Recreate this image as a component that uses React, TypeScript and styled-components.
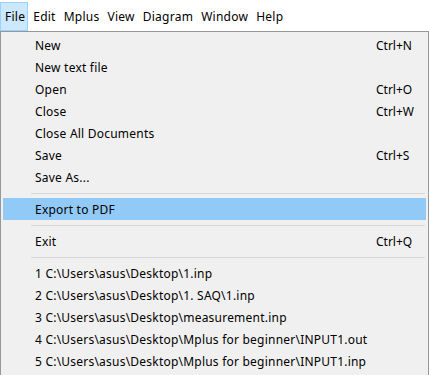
import React from 'react';
import styled, { createGlobalStyle } from 'styled-components';

const GlobalStyle = createGlobalStyle`
  html, body {
    margin: 0;
    padding: 0;
    background: #ffffff;
    overflow: hidden;
  }
  body {
    font-family: "Noto Sans", "Open Sans", "Liberation Sans", sans-serif;
    font-size: 12px;
    color: #000;
  }
`;

const Window = styled.div`
  width: 429px;
  height: 375px;
  display: flex;
  flex-direction: column;
  background: #fff;
`;

const MenuBar = styled.div`
  display: flex;
  align-items: stretch;
  height: 29px;
  padding-top: 2px;
  background: #fff;
`;

const MenuBarItem = styled.div<{ active?: boolean }>`
  display: flex;
  align-items: center;
  padding: 0 2px 0 4px;
  border: 1px solid ${({ active }) => (active ? '#99d1ff' : 'transparent')};
  background: ${({ active }) => (active ? '#cce8ff' : 'transparent')};
  letter-spacing: 0.25px;
`;

const Dropdown = styled.div`
  flex: 1;
  display: flex;
  flex-direction: column;
  background: #f0f0f0;
  border: 1px solid #979797;
  border-bottom: none;
  padding: 2px 2px 0 2px;
`;

const Item = styled.div<{ highlighted?: boolean }>`
  height: 22px;
  display: flex;
  align-items: center;
  padding-left: 32px;
  background: ${({ highlighted }) => (highlighted ? '#91c9f7' : 'transparent')};
  letter-spacing: 0.22px;
`;

const Label = styled.span`
  flex: 1;
  white-space: nowrap;
`;

const Shortcut = styled.span`
  width: 50px;
  white-space: nowrap;
  letter-spacing: 0;
`;

const Separator = styled.div`
  height: 10px;
  display: flex;
  align-items: center;
  padding-left: 28px;
  padding-right: 1px;

  &::after {
    content: '';
    flex: 1;
    height: 1px;
    background: #d7d7d7;
  }
`;

type Entry =
  | { kind: 'item'; label: string; shortcut?: string; highlighted?: boolean }
  | { kind: 'sep' };

const entries: Entry[] = [
  { kind: 'item', label: 'New', shortcut: 'Ctrl+N' },
  { kind: 'item', label: 'New text file' },
  { kind: 'item', label: 'Open', shortcut: 'Ctrl+O' },
  { kind: 'item', label: 'Close', shortcut: 'Ctrl+W' },
  { kind: 'item', label: 'Close All Documents' },
  { kind: 'item', label: 'Save', shortcut: 'Ctrl+S' },
  { kind: 'item', label: 'Save As...' },
  { kind: 'sep' },
  { kind: 'item', label: 'Export to PDF', highlighted: true },
  { kind: 'sep' },
  { kind: 'item', label: 'Exit', shortcut: 'Ctrl+Q' },
  { kind: 'sep' },
  { kind: 'item', label: '1 C:\\Users\\asus\\Desktop\\1.inp' },
  { kind: 'item', label: '2 C:\\Users\\asus\\Desktop\\1. SAQ\\1.inp' },
  { kind: 'item', label: '3 C:\\Users\\asus\\Desktop\\measurement.inp' },
  { kind: 'item', label: '4 C:\\Users\\asus\\Desktop\\Mplus for beginner\\INPUT1.out' },
  { kind: 'item', label: '5 C:\\Users\\asus\\Desktop\\Mplus for beginner\\INPUT1.inp' },
];

const menus = ['File', 'Edit', 'Mplus', 'View', 'Diagram', 'Window', 'Help'];

export default function App() {
  return (
    <>
      <GlobalStyle />
      <Window>
        <MenuBar>
          {menus.map((m, i) => (
            <MenuBarItem key={m} active={i === 0}>
              {m}
            </MenuBarItem>
          ))}
        </MenuBar>
        <Dropdown>
          {entries.map((e, i) =>
            e.kind === 'sep' ? (
              <Separator key={i} />
            ) : (
              <Item key={i} highlighted={e.highlighted}>
                <Label>{e.label}</Label>
                {e.shortcut && <Shortcut>{e.shortcut}</Shortcut>}
              </Item>
            )
          )}
        </Dropdown>
      </Window>
    </>
  );
}
